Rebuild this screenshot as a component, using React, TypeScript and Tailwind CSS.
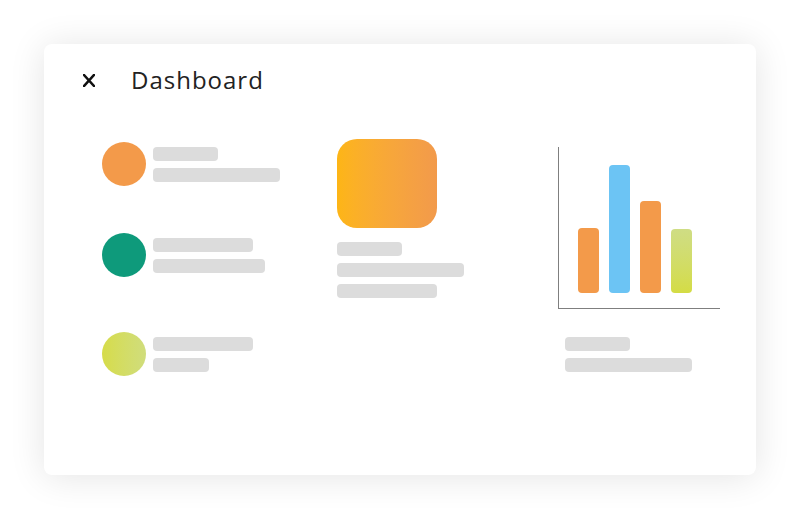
import React from "react";

const Bar = ({ w }: { w: string }) => (
  <div className={`h-[14px] rounded-[4px] bg-[#dcdcdc] ${w}`} />
);

export default function App() {
  return (
    <div className="w-[800px] h-[519px] bg-white pt-[44px] pl-[44px]" style={{ fontFamily: '"Open Sans", sans-serif' }}>
      <div className="w-[712px] h-[431px] bg-white rounded-[8px] shadow-[0_2px_36px_rgba(0,0,0,0.11)] pt-[20px] flex flex-col">
        {/* header */}
        <div className="h-[32px] flex items-center pl-[39px]">
          <svg width="12" height="13" viewBox="0 0 12 13" className="shrink-0">
            <path d="M1 1 L11 12 M11 1 L1 12" stroke="#111" strokeWidth="2.6" strokeLinecap="square" fill="none" />
          </svg>
          <span className="ml-[36px] text-[24px] leading-[32px] text-[#222] tracking-[1px]">Dashboard</span>
        </div>
        {/* content */}
        <div className="mt-[43px] flex items-start pl-[58px]">
          {/* left column */}
          <div className="w-[235px] mt-[3px] flex flex-col">
            <div className="flex items-center gap-[7px]">
              <div className="w-[44px] h-[44px] rounded-full bg-[#f39a4a]" />
              <div className="flex flex-col gap-[7px]">
                <Bar w="w-[65px]" />
                <Bar w="w-[127px]" />
              </div>
            </div>
            <div className="flex items-center gap-[7px] mt-[47px]">
              <div className="w-[44px] h-[44px] rounded-full bg-[#0e9a7b]" />
              <div className="flex flex-col gap-[7px]">
                <Bar w="w-[100px]" />
                <Bar w="w-[112px]" />
              </div>
            </div>
            <div className="flex items-center gap-[7px] mt-[55px]">
              <div className="w-[44px] h-[44px] rounded-full bg-gradient-to-r from-[#d6dc48] to-[#d0dd7c]" />
              <div className="flex flex-col gap-[7px]">
                <Bar w="w-[100px]" />
                <Bar w="w-[56px]" />
              </div>
            </div>
          </div>
          {/* middle column */}
          <div className="w-[221px] flex flex-col">
            <div className="w-[100px] h-[89px] rounded-[20px] bg-gradient-to-r from-[#fdb515] to-[#f29a4b]" />
            <div className="mt-[14px] flex flex-col gap-[7px]">
              <Bar w="w-[65px]" />
              <Bar w="w-[127px]" />
              <Bar w="w-[100px]" />
            </div>
          </div>
          {/* chart column */}
          <div className="mt-[8px] flex flex-col">
            <div className="w-[162px] h-[162px] border-l-[1.5px] border-b-[1.5px] border-[#7f7f7f] flex items-end gap-[10px] pl-[19px] pb-[15px]">
              <div className="w-[21px] h-[65px] rounded-[4px] bg-[#f39a4a]" />
              <div className="w-[21px] h-[128px] rounded-[4px] bg-[#6cc4f4]" />
              <div className="w-[21px] h-[92px] rounded-[4px] bg-[#f39a4a]" />
              <div className="w-[21px] h-[64px] rounded-[4px] bg-gradient-to-b from-[#cfdd84] to-[#d4dc44]" />
            </div>
            <div className="mt-[28px] ml-[7px] flex flex-col gap-[7px]">
              <Bar w="w-[65px]" />
              <Bar w="w-[127px]" />
            </div>
          </div>
        </div>
      </div>
    </div>
  );
}
